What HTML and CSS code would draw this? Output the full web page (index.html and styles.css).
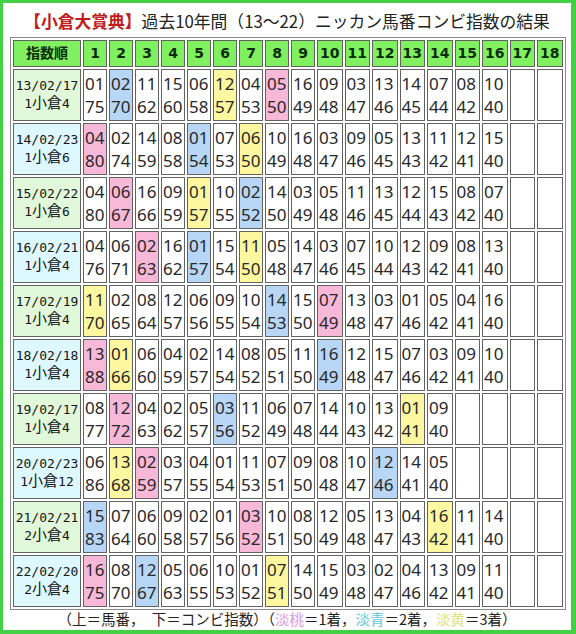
FILE: index.html
```html
<!DOCTYPE html>
<html lang="ja">
<head>
<meta charset="utf-8">
<title>小倉大賞典 ニッカン馬番コンビ指数の結果</title>
<link rel="stylesheet" href="styles.css">
</head>
<body>
<div class="frame">
  <h1 class="title"><b>【小倉大賞典】</b>過去10年間（13～22）ニッカン馬番コンビ指数の結果</h1>
  <table class="results">
    <thead>
      <tr>
        <th class="hd">指数順</th>
        <th class="n">1</th><th class="n">2</th><th class="n">3</th><th class="n">4</th><th class="n">5</th><th class="n">6</th><th class="n">7</th><th class="n">8</th><th class="n">9</th>
        <th class="w">10</th><th class="w">11</th><th class="w">12</th><th class="w">13</th><th class="w">14</th><th class="w">15</th><th class="w">16</th><th class="w">17</th><th class="w">18</th>
      </tr>
    </thead>
    <tbody>
      <tr>
        <th class="date g">13/02/17<br>1<span class="kj">小倉</span>4</th>
        <td>01<br>75</td><td class="b">02<br>70</td><td>11<br>62</td><td>15<br>60</td><td>06<br>58</td><td class="y">12<br>57</td><td>04<br>53</td><td class="p">05<br>50</td><td>16<br>49</td><td>09<br>48</td><td>03<br>47</td><td>13<br>46</td><td>14<br>45</td><td>07<br>44</td><td>08<br>42</td><td>10<br>40</td><td></td><td></td>
      </tr>
      <tr>
        <th class="date c">14/02/23<br>1<span class="kj">小倉</span>6</th>
        <td class="p">04<br>80</td><td>02<br>74</td><td>14<br>59</td><td>08<br>58</td><td class="b">01<br>54</td><td>07<br>53</td><td class="y">06<br>50</td><td>10<br>49</td><td>16<br>48</td><td>03<br>47</td><td>09<br>46</td><td>05<br>45</td><td>13<br>43</td><td>11<br>42</td><td>12<br>41</td><td>15<br>40</td><td></td><td></td>
      </tr>
      <tr>
        <th class="date g">15/02/22<br>1<span class="kj">小倉</span>6</th>
        <td>04<br>80</td><td class="p">06<br>67</td><td>16<br>66</td><td>09<br>59</td><td class="y">01<br>57</td><td>10<br>55</td><td class="b">02<br>52</td><td>14<br>50</td><td>03<br>49</td><td>05<br>48</td><td>11<br>46</td><td>13<br>45</td><td>12<br>44</td><td>15<br>43</td><td>08<br>42</td><td>07<br>40</td><td></td><td></td>
      </tr>
      <tr>
        <th class="date c">16/02/21<br>1<span class="kj">小倉</span>4</th>
        <td>04<br>76</td><td>06<br>71</td><td class="p">02<br>63</td><td>16<br>62</td><td class="b">01<br>57</td><td>15<br>54</td><td class="y">11<br>50</td><td>05<br>48</td><td>14<br>47</td><td>03<br>46</td><td>07<br>45</td><td>10<br>44</td><td>12<br>43</td><td>09<br>42</td><td>08<br>41</td><td>13<br>40</td><td></td><td></td>
      </tr>
      <tr>
        <th class="date g">17/02/19<br>1<span class="kj">小倉</span>4</th>
        <td class="y">11<br>70</td><td>02<br>65</td><td>08<br>64</td><td>12<br>57</td><td>06<br>56</td><td>09<br>55</td><td>10<br>54</td><td class="b">14<br>53</td><td>15<br>50</td><td class="p">07<br>49</td><td>13<br>48</td><td>03<br>47</td><td>01<br>46</td><td>05<br>42</td><td>04<br>41</td><td>16<br>40</td><td></td><td></td>
      </tr>
      <tr>
        <th class="date c">18/02/18<br>1<span class="kj">小倉</span>4</th>
        <td class="p">13<br>88</td><td class="y">01<br>66</td><td>06<br>60</td><td>04<br>59</td><td>02<br>57</td><td>14<br>54</td><td>08<br>52</td><td>05<br>51</td><td>11<br>50</td><td class="b">16<br>49</td><td>12<br>48</td><td>15<br>47</td><td>07<br>46</td><td>03<br>42</td><td>09<br>41</td><td>10<br>40</td><td></td><td></td>
      </tr>
      <tr>
        <th class="date g">19/02/17<br>1<span class="kj">小倉</span>4</th>
        <td>08<br>77</td><td class="p">12<br>72</td><td>04<br>63</td><td>02<br>62</td><td>05<br>57</td><td class="b">03<br>56</td><td>11<br>52</td><td>06<br>49</td><td>07<br>48</td><td>14<br>44</td><td>10<br>43</td><td>13<br>42</td><td class="y">01<br>41</td><td>09<br>40</td><td></td><td></td><td></td><td></td>
      </tr>
      <tr>
        <th class="date c">20/02/23<br>1<span class="kj">小倉</span>12</th>
        <td>06<br>86</td><td class="y">13<br>68</td><td class="p">02<br>59</td><td>03<br>57</td><td>04<br>55</td><td>01<br>54</td><td>11<br>53</td><td>07<br>51</td><td>09<br>50</td><td>08<br>48</td><td>10<br>47</td><td class="b">12<br>46</td><td>14<br>41</td><td>05<br>40</td><td></td><td></td><td></td><td></td>
      </tr>
      <tr>
        <th class="date g">21/02/21<br>2<span class="kj">小倉</span>4</th>
        <td class="b">15<br>83</td><td>07<br>64</td><td>06<br>60</td><td>09<br>58</td><td>02<br>57</td><td>01<br>56</td><td class="p">03<br>52</td><td>10<br>51</td><td>08<br>50</td><td>12<br>49</td><td>05<br>48</td><td>13<br>47</td><td>04<br>43</td><td class="y">16<br>42</td><td>11<br>41</td><td>14<br>40</td><td></td><td></td>
      </tr>
      <tr>
        <th class="date c">22/02/20<br>2<span class="kj">小倉</span>4</th>
        <td class="p">16<br>75</td><td>08<br>70</td><td class="b">12<br>67</td><td>05<br>63</td><td>06<br>55</td><td>10<br>53</td><td>01<br>52</td><td class="y">07<br>51</td><td>14<br>50</td><td>15<br>49</td><td>03<br>48</td><td>02<br>47</td><td>04<br>46</td><td>13<br>42</td><td>09<br>41</td><td>11<br>40</td><td></td><td></td>
      </tr>
    </tbody>
  </table>
  <p class="note">（上＝馬番，　下＝コンビ指数）（<span class="c1">淡桃</span>＝1着，<span class="c2">淡青</span>＝2着，<span class="c3">淡黄</span>＝3着）</p>
</div>
</body>
</html>
```

FILE: styles.css
```css
html, body {
  margin: 0;
  padding: 0;
  background: #ffffff;
}

.frame {
  box-sizing: border-box;
  width: 576px;
  height: 634px;
  border-style: solid;
  border-color: #44d044;
  border-width: 3px 5px 4px 3px;
  background: #ffffff;
}

.title {
  margin: 0;
  padding-top: 8px;
  line-height: 20px;
  text-align: center;
  font-family: "Noto Sans CJK JP", sans-serif;
  font-size: 16.8px;
  font-weight: normal;
  color: #222222;
  white-space: nowrap;
}

.title b {
  color: #c01c1c;
  font-weight: bold;
}

.results {
  margin: 6px 0 0 7px;
  border-collapse: separate;
  border-spacing: 2px;
  border: 1px solid #8a8a8a;
}

.results th,
.results td {
  border: 1px solid #626262;
  padding: 0;
}

.results thead th {
  background: #80f060;
  line-height: 25px;
  font-family: "DejaVu Sans", "Noto Sans CJK JP", sans-serif;
  font-size: 14px;
  font-weight: bold;
  color: #0b2b0b;
  text-align: center;
}

.results th.hd { width: 66px; }
.results th.n { width: 22px; }
.results th.w { width: 23.5px; }

.results td {
  font-family: "Noto Sans", sans-serif;
  font-size: 17px;
  line-height: 23px;
  padding: 2px 0 2px 1px;
  color: #282828;
  text-align: left;
  vertical-align: middle;
  background: #ffffff;
}

.results td.p { background: #f8b8d8; }
.results td.b { background: #b8d6f6; }
.results td.y { background: #fdf7a0; }

.results th.date {
  font-family: "DejaVu Sans Mono", "Noto Sans CJK JP", monospace;
  font-size: 13px;
  line-height: 16px;
  font-weight: normal;
  color: #151515;
  text-align: center;
  vertical-align: middle;
}

.results th.date .kj {
  font-family: "Noto Sans CJK JP", sans-serif;
  font-size: 15px;
  line-height: 16px;
}

.results th.g { background: #e2f8da; }
.results th.c { background: #ddf8ff; }

.note {
  margin: 0;
  text-align: center;
  font-family: "Noto Sans CJK JP", sans-serif;
  font-size: 14.5px;
  line-height: 18px;
  color: #222222;
  white-space: nowrap;
}

.c1 { color: #d89ee0; }
.c2 { color: #5cc8dc; }
.c3 { color: #e0e07a; }
```
